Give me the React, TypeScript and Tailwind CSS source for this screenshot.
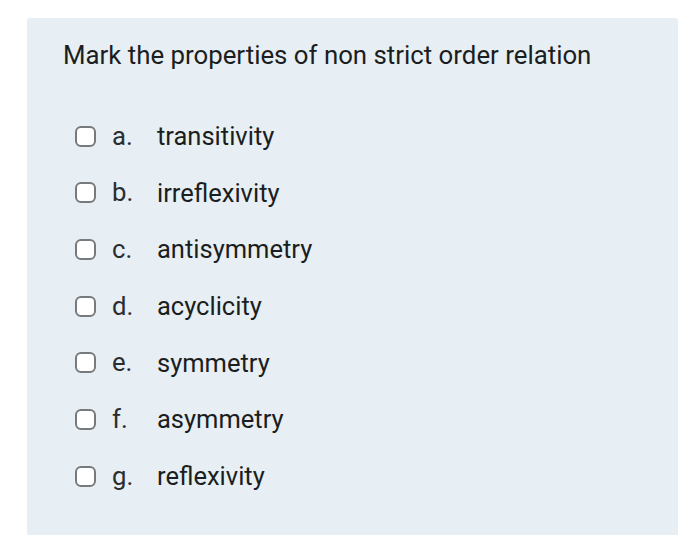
const options = [
  { letter: 'a.', text: 'transitivity' },
  { letter: 'b.', text: 'irreflexivity' },
  { letter: 'c.', text: 'antisymmetry' },
  { letter: 'd.', text: 'acyclicity' },
  { letter: 'e.', text: 'symmetry' },
  { letter: 'f.', text: 'asymmetry' },
  { letter: 'g.', text: 'reflexivity' },
];

export default function App() {
  return (
    <div className="w-[700px] h-[535px] bg-white pt-[18px] pl-[27px] pr-[22px] overflow-hidden font-['Roboto',sans-serif]">
      <div className="h-[517px] bg-[#e7eff4] rounded-t-[3px] pl-[36px] pt-[22px]">
        <h1 className="text-[25.8px] leading-[30px] text-[#1b1e21]">Mark the properties of non strict order relation</h1>
        <ul className="mt-[56px] flex flex-col gap-[36.7px]">
          {options.map((o) => (
            <li key={o.letter} className="flex items-center h-[20px]">
              <span className="ml-[12px] w-[21px] h-[21px] shrink-0 rounded-[6px] border-2 border-[#777a7c] bg-white" />
              <span className="ml-[16px] w-[45px] text-[25.7px] text-[#2a2d30]">{o.letter}</span>
              <span className="text-[25.5px] text-[#1b1e21]">{o.text}</span>
            </li>
          ))}
        </ul>
      </div>
    </div>
  );
}
